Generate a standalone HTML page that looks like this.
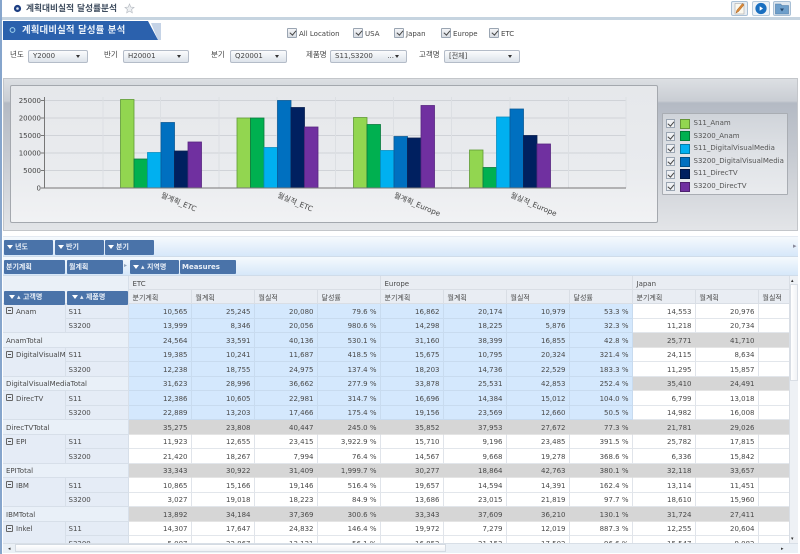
<!DOCTYPE html>
<html><head><meta charset="utf-8"><style>
html,body{margin:0;padding:0}
body{width:800px;height:554px;overflow:hidden;background:#fff;position:relative;font-family:"DejaVu Sans","Noto Sans CJK KR",sans-serif;font-size:7px;color:#444;filter:blur(.3px)}
.a{position:absolute}
.t{position:absolute;white-space:nowrap;line-height:10px}
.sel{position:absolute;top:50px;height:11px;border:1px solid #b4bcc8;border-radius:2px;background:linear-gradient(#fbfcfd,#dde3ea);line-height:11px;padding-left:4px;box-sizing:content-box;font-size:7px;color:#444}
.sel:after{content:"";position:absolute;right:7px;top:4px;border:2px solid transparent;border-top:3px solid #333}
.cb{position:absolute;top:28px;width:8px;height:8px;border:1px solid #9aa5b2;background:linear-gradient(#f4f5f7,#d8dde3);border-radius:1px}
.cb:after,.lc:after{content:"";position:absolute;left:2.5px;top:0;width:2.5px;height:5px;border:solid #444;border-width:0 1.3px 1.3px 0;transform:rotate(40deg)}
.btn{position:absolute;height:14.5px;background:#4a73a9;border-radius:1px;color:#fff;font-size:7px;font-weight:bold;line-height:14px;padding-left:2px;box-sizing:border-box;white-space:nowrap;color:#e9eff7}
.f{display:inline-block;border:3px solid transparent;border-top:4px solid #fff;border-bottom:0;vertical-align:0;margin:0 2px 0 1px}
.lc{position:absolute;left:665.5px;width:7px;height:7px;border:1px solid #9aa5b2;background:#eef0f3}
.sw{position:absolute;left:680px;width:8px;height:8px;border:.6px solid rgba(0,0,0,.3)}
.lt{position:absolute;left:693.5px;font-size:7px;line-height:10px;color:#555;white-space:nowrap}
#grid{position:absolute;left:3px;top:276px;width:785.5px;height:267px;overflow:hidden;display:grid;grid-template-columns:62.5px 63px repeat(11,63px);grid-template-rows:14px 14px;grid-auto-rows:14.5px;background:#fff}
#grid p{margin:0;box-sizing:border-box;border-right:1px solid #e0e4ea;border-bottom:1px solid #e2e6eb;text-align:right;padding:1.5px 3px 0 0;line-height:12px;white-space:nowrap;overflow:hidden;color:#4a4a4a;background:#fff}
#grid p.b{background:#d4e8fd;border-color:#c8dbef}
#grid p.g{background:#d6d6d6;border-right-color:#d6d6d6;border-bottom-color:#e4e4e4}
#grid p.h{background:#e5ecf6;text-align:left;padding-left:3px;border-color:#d7dfe9}
#grid p.c{background:#e5ecf6;text-align:left;padding-left:3px;border-color:#d7dfe9;grid-row:span 2}
#grid p.t2{background:#e9f0f8;text-align:left;padding-left:3px;grid-column:span 2;border-color:#d7dfe9;overflow:visible}
#grid p.top{background:#e9edf3;text-align:left;padding-left:4px;grid-column:span 4;border-color:#d9dee5}
#grid p.sub{background:#e9edf3;text-align:left;padding-left:4px;border-color:#d9dee5}
.m{display:inline-block;width:5px;height:5px;border:.7px solid #666;border-radius:1px;margin-right:3px;position:relative;vertical-align:-.5px}
.m:after{content:"";position:absolute;left:1px;right:1px;top:2.1px;height:.8px;background:#555}
</style></head><body>
<div class="a" style="left:0;top:0;width:2px;height:554px;background:#86a5cc"></div>
<!-- top bar -->
<svg class="a" style="left:12px;top:3px" width="12" height="12"><circle cx="5.5" cy="5.5" r="3.6" fill="#1c3e82"/><circle cx="5.5" cy="5.5" r="1.3" fill="#dfe8f5"/></svg>
<div class="t" style="left:26px;top:4px;font-size:8.700px;font-weight:bold;color:#3c4a5c">계획대비실적 달성률분석</div>
<svg class="a" style="left:124px;top:3px" width="11" height="11" viewBox="0 0 11 11"><path d="M5.5 1L6.8 4.1 10 4.4 7.6 6.5 8.3 9.8 5.5 8.1 2.7 9.8 3.4 6.5 1 4.4 4.2 4.1Z" fill="#eef0f2" stroke="#b8bdc4" stroke-width=".7"/></svg>
<div class="a" style="left:731px;top:1px;width:17px;height:15px;border:1px solid #a9c0d6;border-radius:2px;background:#e9eef3;box-sizing:border-box"></div>
<svg class="a" style="left:731px;top:1px" width="17" height="15" viewBox="0 0 17 15"><rect x="4" y="2.5" width="9" height="10.5" fill="#fbf8ee" stroke="#aaa" stroke-width=".6"/><path d="M5 12L6 9 11.5 2.5 13 4 7.5 10.5Z" fill="#d98a3a" stroke="#a85f20" stroke-width=".5"/></svg>
<div class="a" style="left:752px;top:1px;width:18px;height:15px;border:1px solid #b6cadc;border-radius:2px;background:#eef2f6;box-sizing:border-box"></div>
<svg class="a" style="left:752px;top:1px" width="18" height="15" viewBox="0 0 18 15"><circle cx="9" cy="7.5" r="5.6" fill="#1a6fc0"/><path d="M7.7 5.3L11 7.5 7.7 9.7Z" fill="#fff"/></svg>
<div class="a" style="left:773px;top:1px;width:18px;height:15px;border:1px solid #a9c0d6;border-radius:2px;background:#dfe7ef;box-sizing:border-box"></div>
<svg class="a" style="left:773px;top:1px" width="18" height="15" viewBox="0 0 18 15"><path d="M2.5 3H7.5L9 4.5H15.5V13H2.5Z" fill="#6e9fcb" stroke="#4d7ba6" stroke-width=".6"/><path d="M7 7.5H11L9 10.5Z" fill="#24476e"/></svg>
<div class="a" style="left:2px;top:17px;width:798px;height:3px;background:#c6d4e0"></div>
<!-- title tab -->
<svg class="a" style="left:3px;top:21px" width="160" height="19"><path d="M148 2H158V19H155Z" fill="#c5d3e6"/><path d="M0 0H145L155 19H0Z" fill="#2b61ad"/></svg>
<svg class="a" style="left:8px;top:25px" width="10" height="10"><circle cx="4.500" cy="5" r="2.400" fill="none" stroke="#9fd4ee" stroke-width="1"/></svg>
<div class="t" style="left:22px;top:26px;font-size:9.400px;font-weight:bold;color:#eaf1fa;letter-spacing:.15px">계획대비실적 달성률 분석</div>
<!-- checkboxes -->
<div class="cb" style="left:287px"></div><div class="t" style="left:299px;top:29px">All Location</div>
<div class="cb" style="left:353px"></div><div class="t" style="left:365px;top:29px">USA</div>
<div class="cb" style="left:394px"></div><div class="t" style="left:406px;top:29px">Japan</div>
<div class="cb" style="left:441px"></div><div class="t" style="left:453px;top:29px">Europe</div>
<div class="cb" style="left:489px"></div><div class="t" style="left:501px;top:29px">ETC</div>
<!-- filters -->
<div class="t" style="left:10px;top:50px;font-size:7.500px">년도</div>
<div class="sel" style="left:28px;width:54px">Y2000</div>
<div class="t" style="left:104px;top:50px;font-size:7.500px">반기</div>
<div class="sel" style="left:123px;width:60px">H20001</div>
<div class="t" style="left:211px;top:50px;font-size:7.500px">분기</div>
<div class="sel" style="left:230px;width:51px">Q20001</div>
<div class="t" style="left:306px;top:50px;font-size:7.500px">제품명</div>
<div class="sel" style="left:330px;width:71px">S11,S3200<span style="position:absolute;right:12px;top:0">...</span></div>
<div class="t" style="left:419px;top:50px;font-size:7.500px">고객명</div>
<div class="sel" style="left:444px;width:70px">[전체]</div>
<!-- chart panel -->
<div class="a" style="left:3px;top:78px;width:795px;height:153px;box-sizing:border-box;border:1px solid #c3c6ca;background:linear-gradient(#dcdfe3 0,#c9cdd3 22px,#b4bac4 24px,#c6cad1 50%,#e3e5e8 100%)"></div>
<div class="a" style="left:10px;top:85px;width:648px;height:138px;box-sizing:border-box;border:1px solid #a4a8ae;border-radius:2px;background:linear-gradient(#e6e8eb,#e9ebee 60%,#f1f2f4)"></div>
<svg class="a" style="left:0;top:75px" width="660" height="150" font-family="DejaVu Sans,Noto Sans CJK KR,sans-serif">
<g transform="translate(0,-75)">
<g stroke="#d0d3d8" stroke-width="1" fill="none"><path d="M45 100.500H626M45 118H626M45 135.500H626M45 153H626M45 170.500H626"/><path stroke="#dcdfe3" d="M103 97V188M160.500 97V188M219 97V188M277 97V188M335.500 97V188M393.500 97V188M451.500 97V188M510 97V188M568.500 97V188M626 97V188"/></g>
<g stroke-width=".8">
<g fill="#92d650" stroke="#5f9a35"><rect x="120.500" y="99.500" width="13.500" height="88.500"/><rect x="237" y="118" width="13.500" height="70"/><rect x="353.500" y="117.500" width="13.500" height="70.500"/><rect x="469.500" y="150" width="13.500" height="38"/></g>
<g fill="#00b050" stroke="#0c7a3e"><rect x="134" y="159" width="13.500" height="29"/><rect x="250.500" y="118" width="13.500" height="70"/><rect x="367" y="124.500" width="13.500" height="63.500"/><rect x="483" y="167.500" width="13.500" height="20.500"/></g>
<g fill="#00b0f0" stroke="#0a8fc0"><rect x="147.500" y="152.500" width="13.500" height="35.500"/><rect x="264" y="147.500" width="13.500" height="40.500"/><rect x="380.500" y="150.500" width="13.500" height="37.500"/><rect x="496.500" y="117" width="13.500" height="71"/></g>
<g fill="#0070c0" stroke="#0a5a96"><rect x="161" y="122.500" width="13.500" height="65.500"/><rect x="277.500" y="100.500" width="13.500" height="87.500"/><rect x="394" y="136.500" width="13.500" height="51.500"/><rect x="510" y="109" width="13.500" height="79"/></g>
<g fill="#002060" stroke="#0a2050"><rect x="174.500" y="151" width="13.500" height="37"/><rect x="291" y="107.500" width="13.500" height="80.500"/><rect x="407.500" y="138" width="13.500" height="50"/><rect x="523.500" y="135.500" width="13.500" height="52.500"/></g>
<g fill="#7030a0" stroke="#582680"><rect x="188" y="142" width="13.500" height="46"/><rect x="304.500" y="127" width="13.500" height="61"/><rect x="421" y="105.500" width="13.500" height="82.500"/><rect x="537" y="144" width="13.500" height="44"/></g>
</g>
<path d="M44.500 97V188.500M41 100.500H45M41 118H45M41 135.500H45M41 153H45M41 170.500H45M41 188H626" stroke="#777" stroke-width="1" fill="none"/>
<g font-size="7" fill="#444" text-anchor="end"><text x="41" y="103">25000</text><text x="41" y="120.500">20000</text><text x="41" y="138">15000</text><text x="41" y="155.500">10000</text><text x="41" y="173">5000</text><text x="41" y="190.500">0</text></g>
<g font-size="7.300" fill="#444"><text transform="translate(160.500,197) rotate(23)">월계획_ETC</text><text transform="translate(277,197) rotate(23)">월실적_ETC</text><text transform="translate(393.500,197) rotate(23)">월계획_Europe</text><text transform="translate(510,197) rotate(23)">월실적_Europe</text></g>
</g></svg>
<!-- legend -->
<div class="a" style="left:662px;top:113px;width:126px;height:82px;box-sizing:border-box;border:1px solid #a9adb3;border-radius:1px;background:linear-gradient(#d0d4da,#dfe2e6 50%,#e9ebee)"></div>
<div class="lc" style="top:119px"></div><div class="sw" style="top:118.500px;background:#92d650"></div><div class="lt" style="top:117.500px">S11_Anam</div>
<div class="lc" style="top:131.500px"></div><div class="sw" style="top:131px;background:#00b050"></div><div class="lt" style="top:130.500px">S3200_Anam</div>
<div class="lc" style="top:144px"></div><div class="sw" style="top:144px;background:#00b0f0"></div><div class="lt" style="top:143px">S11_DigitalVisualMedia</div>
<div class="lc" style="top:157px"></div><div class="sw" style="top:156.500px;background:#0070c0"></div><div class="lt" style="top:155.500px">S3200_DigitalVisualMedia</div>
<div class="lc" style="top:169.500px"></div><div class="sw" style="top:169px;background:#002060"></div><div class="lt" style="top:168px">S11_DirecTV</div>
<div class="lc" style="top:182px"></div><div class="sw" style="top:181.500px;background:#7030a0"></div><div class="lt" style="top:180.500px">S3200_DirecTV</div>
<!-- pivot strips -->
<div class="a" style="left:3px;top:236px;width:795px;height:21px;background:linear-gradient(#f5f9fd,#d6e7f9);border-top:1px solid #e4eaf2;box-sizing:border-box;border-bottom:1px solid #cfdcea"></div>
<div class="a" style="left:3px;top:257px;width:795px;height:19px;background:linear-gradient(#f5f9fd,#d6e7f9);border-bottom:1px solid #cfdcea;box-sizing:border-box"></div>
<div class="btn" style="left:4px;top:240px;width:49px"><span class="f"></span>년도</div>
<div class="btn" style="left:55px;top:240px;width:49px"><span class="f"></span>반기</div>
<div class="btn" style="left:105px;top:240px;width:49px"><span class="f"></span>분기</div>
<div class="t" style="left:793px;top:241px;font-size:7px;color:#889">▸</div>
<div class="btn" style="left:4px;top:259.500px;width:61px">분기계획</div>
<div class="btn" style="left:67px;top:259.500px;width:56px">월계획</div>
<div class="t" style="left:124px;top:261px;font-size:6px;color:#8fa3bb">▸</div>
<div class="btn" style="left:130px;top:259.500px;width:49px"><span class="f"></span>▴ 지역명</div>
<div class="btn" style="left:180px;top:259.500px;width:56px">Measures</div>
<!-- grid -->
<div id="grid">
<p class="t2" style="background:#eaf0f7;grid-row:span 2"></p>
<p class="top">ETC</p><p class="top">Europe</p><p class="top" style="grid-column:span 3">Japan</p>
<p class="sub">분기계획</p><p class="sub">월계획</p><p class="sub">월실적</p><p class="sub">달성률</p><p class="sub">분기계획</p><p class="sub">월계획</p><p class="sub">월실적</p><p class="sub">달성률</p><p class="sub">분기계획</p><p class="sub">월계획</p><p class="sub">월실적</p>

<p class="c"><i class="m"></i>Anam</p><p class="h">S11</p><p class="b">10,565</p><p class="b">25,245</p><p class="b">20,080</p><p class="b">79.6 %</p><p class="b">16,862</p><p class="b">20,174</p><p class="b">10,979</p><p class="b">53.3 %</p><p>14,553</p><p>20,976</p><p></p>
<p class="h">S3200</p><p class="b">13,999</p><p class="b">8,346</p><p class="b">20,056</p><p class="b">980.6 %</p><p class="b">14,298</p><p class="b">18,225</p><p class="b">5,876</p><p class="b">32.3 %</p><p>11,218</p><p>20,734</p><p></p>
<p class="t2">AnamTotal</p><p class="b">24,564</p><p class="b">33,591</p><p class="b">40,136</p><p class="b">530.1 %</p><p class="b">31,160</p><p class="b">38,399</p><p class="b">16,855</p><p class="b">42.8 %</p><p class="g">25,771</p><p class="g">41,710</p><p class="g"></p>

<p class="c"><i class="m"></i>DigitalVisualM</p><p class="h">S11</p><p class="b">19,385</p><p class="b">10,241</p><p class="b">11,687</p><p class="b">418.5 %</p><p class="b">15,675</p><p class="b">10,795</p><p class="b">20,324</p><p class="b">321.4 %</p><p>24,115</p><p>8,634</p><p></p>
<p class="h">S3200</p><p class="b">12,238</p><p class="b">18,755</p><p class="b">24,975</p><p class="b">137.4 %</p><p class="b">18,203</p><p class="b">14,736</p><p class="b">22,529</p><p class="b">183.3 %</p><p>11,295</p><p>15,857</p><p></p>
<p class="t2">DigitalVisualMediaTotal</p><p class="b">31,623</p><p class="b">28,996</p><p class="b">36,662</p><p class="b">277.9 %</p><p class="b">33,878</p><p class="b">25,531</p><p class="b">42,853</p><p class="b">252.4 %</p><p class="g">35,410</p><p class="g">24,491</p><p class="g"></p>

<p class="c"><i class="m"></i>DirecTV</p><p class="h">S11</p><p class="b">12,386</p><p class="b">10,605</p><p class="b">22,981</p><p class="b">314.7 %</p><p class="b">16,696</p><p class="b">14,384</p><p class="b">15,012</p><p class="b">104.0 %</p><p>6,799</p><p>13,018</p><p></p>
<p class="h">S3200</p><p class="b">22,889</p><p class="b">13,203</p><p class="b">17,466</p><p class="b">175.4 %</p><p class="b">19,156</p><p class="b">23,569</p><p class="b">12,660</p><p class="b">50.5 %</p><p>14,982</p><p>16,008</p><p></p>
<p class="t2">DirecTVTotal</p><p class="g">35,275</p><p class="g">23,808</p><p class="g">40,447</p><p class="g">245.0 %</p><p class="g">35,852</p><p class="g">37,953</p><p class="g">27,672</p><p class="g">77.3 %</p><p class="g">21,781</p><p class="g">29,026</p><p class="g"></p>

<p class="c"><i class="m"></i>EPI</p><p class="h">S11</p><p>11,923</p><p>12,655</p><p>23,415</p><p>3,922.9 %</p><p>15,710</p><p>9,196</p><p>23,485</p><p>391.5 %</p><p>25,782</p><p>17,815</p><p></p>
<p class="h">S3200</p><p>21,420</p><p>18,267</p><p>7,994</p><p>76.4 %</p><p>14,567</p><p>9,668</p><p>19,278</p><p>368.6 %</p><p>6,336</p><p>15,842</p><p></p>
<p class="t2">EPITotal</p><p class="g">33,343</p><p class="g">30,922</p><p class="g">31,409</p><p class="g">1,999.7 %</p><p class="g">30,277</p><p class="g">18,864</p><p class="g">42,763</p><p class="g">380.1 %</p><p class="g">32,118</p><p class="g">33,657</p><p class="g"></p>

<p class="c"><i class="m"></i>IBM</p><p class="h">S11</p><p>10,865</p><p>15,166</p><p>19,146</p><p>516.4 %</p><p>19,657</p><p>14,594</p><p>14,391</p><p>162.4 %</p><p>13,114</p><p>11,451</p><p></p>
<p class="h">S3200</p><p>3,027</p><p>19,018</p><p>18,223</p><p>84.9 %</p><p>13,686</p><p>23,015</p><p>21,819</p><p>97.7 %</p><p>18,610</p><p>15,960</p><p></p>
<p class="t2">IBMTotal</p><p class="g">13,892</p><p class="g">34,184</p><p class="g">37,369</p><p class="g">300.6 %</p><p class="g">33,343</p><p class="g">37,609</p><p class="g">36,210</p><p class="g">130.1 %</p><p class="g">31,724</p><p class="g">27,411</p><p class="g"></p>

<p class="c"><i class="m"></i>Inkel</p><p class="h">S11</p><p>14,307</p><p>17,647</p><p>24,832</p><p>146.4 %</p><p>19,972</p><p>7,279</p><p>12,019</p><p>887.3 %</p><p>12,255</p><p>20,604</p><p></p>
<p class="h">S3200</p><p>5,007</p><p>22,867</p><p>13,121</p><p>56.1 %</p><p>16,852</p><p>21,153</p><p>17,502</p><p>96.6 %</p><p>15,547</p><p>9,082</p><p></p>
</div>
<!-- buttons over row header -->
<div class="btn" style="left:4px;top:291px;width:61px;height:13.500px;line-height:13px;padding-left:4px"><span class="f"></span>▴ 고객명</div>
<div class="btn" style="left:67px;top:291px;width:61px;height:13.500px;line-height:13px;padding-left:4px"><span class="f"></span>▴ 제품명</div>
<!-- scrollbars -->
<div class="a" style="left:788.500px;top:276px;width:9.500px;height:267px;background:#eef1f5;border-left:1px solid #d9dee5;box-sizing:border-box"></div>
<div class="a" style="left:790px;top:284px;width:8px;height:97px;background:linear-gradient(90deg,#fff,#f1f3f6);border:1px solid #d9dee5;box-sizing:border-box"></div>
<div class="t" style="left:791px;top:276px;font-size:5px;color:#333">▴</div>
<div class="t" style="left:791px;top:534px;font-size:5px;color:#333">▾</div>
<div class="a" style="left:3px;top:543px;width:795px;height:10px;background:#eaf0f6;border-top:1px solid #d8dfe7;box-sizing:border-box"></div>
<div class="a" style="left:15px;top:544px;width:431px;height:8px;background:linear-gradient(#fff,#eef1f5);border:1px solid #d3dae2;box-sizing:border-box"></div>
<div class="t" style="left:8px;top:544px;font-size:5px;color:#333">◂</div>
<div class="t" style="left:781px;top:544px;font-size:5px;color:#333">▸</div>
</body></html>
